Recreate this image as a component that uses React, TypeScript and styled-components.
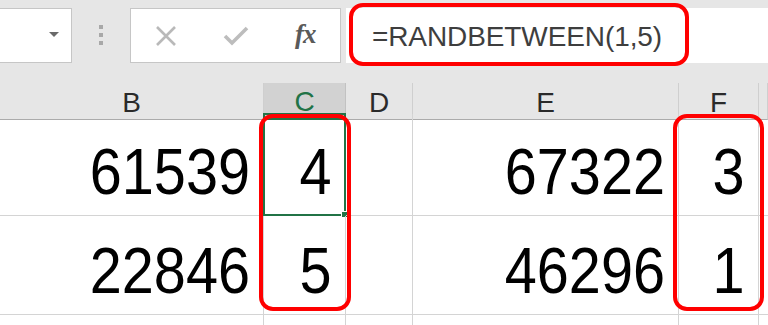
import React from "react";
import styled, { createGlobalStyle } from "styled-components";

const GlobalStyle = createGlobalStyle`
  html, body { margin: 0; padding: 0; background: #ffffff; overflow: hidden; }
  * { box-sizing: border-box; }
`;

const Page = styled.div`
  position: relative;
  width: 768px;
  height: 325px;
  overflow: hidden;
  background: #ffffff;
  font-family: "Liberation Sans", Arial, sans-serif;
`;

const Toolbar = styled.div`
  display: flex;
  align-items: flex-start;
  height: 83px;
  padding-top: 8px;
  background: #e6e6e6;
`;

const NameBox = styled.div`
  position: relative;
  display: flex;
  align-items: center;
  justify-content: flex-end;
  width: 73px;
  height: 55px;
  margin-left: -1px;
  padding-right: 12px;
  background: #ffffff;
  border: 1px solid #c6c6c6;
`;

const DropArrow = styled.div`
  width: 0;
  height: 0;
  border-left: 5px solid transparent;
  border-right: 5px solid transparent;
  border-top: 5px solid #6a6a6a;
  margin-top: -2px;
`;

const Grip = styled.div`
  display: flex;
  flex-direction: column;
  align-items: center;
  gap: 4px;
  width: 58px;
  padding-top: 17px;
`;

const GripDot = styled.span`
  display: block;
  width: 4px;
  height: 4px;
  background: #a8a8a8;
`;

const FuncBox = styled.div`
  display: flex;
  align-items: center;
  width: 211px;
  height: 55px;
  background: #ffffff;
  border: 1px solid #c6c6c6;
`;

const IconSlot = styled.div<{ $w: number }>`
  display: flex;
  align-items: center;
  justify-content: center;
  width: ${(p) => p.$w}px;
  height: 100%;
`;

const Fx = styled.span`
  font-family: "Liberation Serif", "Times New Roman", serif;
  font-style: italic;
  font-weight: bold;
  font-size: 27px;
  color: #5a5a5a;
  letter-spacing: -1px;
  margin-top: -2px;
`;

const FormulaBar = styled.div`
  display: flex;
  align-items: center;
  flex: 1;
  height: 55px;
  margin-left: 5px;
  padding-left: 26px;
  background: #ffffff;
`;

const FormulaText = styled.span`
  font-family: "Liberation Sans", Arial, sans-serif;
  font-size: 28px;
  color: #3e3e3e;
  letter-spacing: -0.1px;
  margin-top: 2px;
`;

const Row = styled.div<{ $h: number }>`
  display: grid;
  grid-template-columns: 264px 82px 67px 266px 80px 1fr;
  height: ${(p) => p.$h}px;
`;

const HeadCell = styled.div<{ $active?: boolean }>`
  display: flex;
  align-items: center;
  justify-content: center;
  padding-top: 3px;
  font-size: 28px;
  color: ${(p) => (p.$active ? "#217346" : "#2a2a2a")};
  background: ${(p) => (p.$active ? "#d2d2d2" : "#e6e6e6")};
  border-right: 1px solid ${(p) => (p.$active ? "#c2c2c2" : "#cfcfcf")};
  border-bottom: ${(p) => (p.$active ? "2px solid #217346" : "1px solid #ababab")};
`;

const Cell = styled.div`
  position: relative;
  display: flex;
  align-items: flex-end;
  justify-content: flex-end;
  padding: 0 13px 11px 0;
  border-right: 1px solid #d4d4d4;
  border-bottom: 1px solid #d4d4d4;
`;

const Value = styled.span`
  display: inline-block;
  font-size: 64px;
  line-height: 64px;
  color: #000000;
  transform: scaleX(0.9);
  transform-origin: right bottom;
`;

const Selection = styled.div`
  position: absolute;
  left: -1px;
  top: -1px;
  right: -1px;
  bottom: -1px;
  border: 2px solid #217346;
  pointer-events: none;
`;

const FillHandle = styled.div`
  position: absolute;
  right: -4px;
  bottom: -4px;
  width: 7px;
  height: 7px;
  background: #217346;
  border: 1px solid #ffffff;
`;

const Mark = styled.div<{ $l: number; $t: number; $w: number; $h: number }>`
  position: absolute;
  left: ${(p) => p.$l}px;
  top: ${(p) => p.$t}px;
  width: ${(p) => p.$w}px;
  height: ${(p) => p.$h}px;
  border: 4px solid #ff0000;
  border-radius: 14px;
  pointer-events: none;
`;

const CrossIcon = () => (
  <svg width="22" height="22" viewBox="0 0 22 22">
    <path d="M2 2 L20 20 M20 2 L2 20" stroke="#b9b9b9" strokeWidth="2.6" fill="none" />
  </svg>
);

const CheckIcon = () => (
  <svg width="26" height="20" viewBox="0 0 26 20">
    <path d="M2 10 L9 17 L24 2" stroke="#bdbdbd" strokeWidth="3.6" fill="none" strokeLinejoin="miter" />
  </svg>
);

const rows: { h: number; cells: string[] }[] = [
  { h: 102, cells: ["61539", "4", "", "67322", "3", ""] },
  { h: 99, cells: ["22846", "5", "", "46296", "1", ""] },
  { h: 40, cells: ["", "", "", "", "", ""] },
];

const headers = ["B", "C", "D", "E", "F", ""];

export default function App() {
  return (
    <Page>
      <GlobalStyle />
      <Toolbar>
        <NameBox>
          <DropArrow />
        </NameBox>
        <Grip>
          <GripDot />
          <GripDot />
          <GripDot />
        </Grip>
        <FuncBox>
          <IconSlot $w={70}>
            <CrossIcon />
          </IconSlot>
          <IconSlot $w={70}>
            <CheckIcon />
          </IconSlot>
          <IconSlot $w={70}>
            <Fx>fx</Fx>
          </IconSlot>
        </FuncBox>
        <FormulaBar>
          <FormulaText>=RANDBETWEEN(1,5)</FormulaText>
        </FormulaBar>
      </Toolbar>
      <Row $h={31}>
        {headers.map((h, i) => (
          <HeadCell key={i} $active={h === "C"}>
            {h}
          </HeadCell>
        ))}
      </Row>
      {rows.map((r, ri) => (
        <Row key={ri} $h={r.h}>
          {r.cells.map((c, ci) => (
            <Cell key={ci}>
              {c && <Value>{c}</Value>}
              {ri === 0 && ci === 1 && (
                <Selection>
                  <FillHandle />
                </Selection>
              )}
            </Cell>
          ))}
        </Row>
      ))}
      <Mark $l={349} $t={3} $w={340} $h={63} />
      <Mark $l={259} $t={114} $w={92} $h={197} />
      <Mark $l={673} $t={114} $w={91} $h={197} />
    </Page>
  );
}
